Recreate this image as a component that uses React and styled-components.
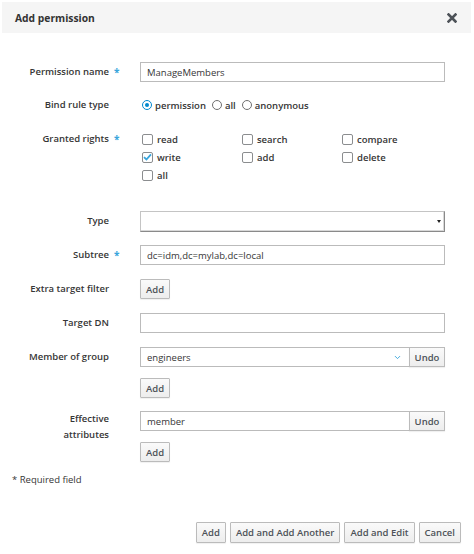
import React from "react";
import styled, { createGlobalStyle } from "styled-components";
import { ChevronDown } from "lucide-react";

const GlobalStyle = createGlobalStyle`
  html, body {
    margin: 0;
    padding: 0;
    background: #ffffff;
  }
  body {
    font-family: "Open Sans", "Liberation Sans", sans-serif;
    color: #363636;
  }
`;

const Dialog = styled.div`
  width: 474px;
  height: 554px;
  background: #fff;
  display: flex;
  flex-direction: column;
`;

const Header = styled.div`
  margin: 2px 3px 0 2px;
  height: 31px;
  padding: 0 14px 0 13px;
  display: flex;
  align-items: center;
  justify-content: space-between;
  background: #f5f5f5;
`;

const Title = styled.h4`
  margin: 0;
  font-size: 10.3px;
  font-weight: 700;
  color: #333;
`;

const Close = styled.button`
  border: 0;
  background: none;
  padding: 0;
  display: flex;
  color: #4d5258;
`;

const Form = styled.div`
  padding: 29px 0 0 0;
  display: flex;
  flex-direction: column;
`;

const Row = styled.div`
  display: grid;
  grid-template-columns: 109px 31px 305px;
  align-items: start;
  margin-bottom: ${(p) => p.$gap ?? 14}px;
`;

const Label = styled.div`
  text-align: right;
  font-size: 9.5px;
  font-weight: 600;
  line-height: ${(p) => p.$lh ?? 20}px;
  color: #363636;
  white-space: nowrap;
`;

const Star = styled.span`
  padding-left: 5px;
  font-size: 10px;
  font-weight: 700;
  line-height: ${(p) => p.$lh ?? 20}px;
  color: #39a5dc;
`;

const Field = styled.div`
  display: flex;
  flex-direction: column;
  gap: ${(p) => p.$gap ?? 10}px;
  align-items: flex-start;
`;

const Input = styled.div`
  box-sizing: border-box;
  width: 305px;
  height: 20px;
  border: 1px solid #bbb;
  padding: 0 6px;
  display: flex;
  align-items: center;
  justify-content: space-between;
  font-size: 9.5px;
  color: #363636;
  background: #fff;
`;

const GroupInput = styled(Input)`
  width: auto;
  flex: 1;
  padding-right: 7px;
`;

const Select = styled.div`
  box-sizing: border-box;
  width: 305px;
  height: 21px;
  border: 1px solid #c4c4c4;
  border-right-color: #8a8a8a;
  border-bottom-color: #8a8a8a;
  box-shadow: inset -1px -1px 0 #d8d8d8;
  display: flex;
  align-items: center;
  justify-content: flex-end;
  padding-right: 3px;
`;

const Caret = styled.span`
  width: 0;
  height: 0;
  border-left: 2.5px solid transparent;
  border-right: 2.5px solid transparent;
  border-top: 3px solid #222;
`;

const Group = styled.div`
  display: flex;
  width: 305px;
`;

const Button = styled.button`
  box-sizing: border-box;
  height: ${(p) => p.$h ?? 20}px;
  padding: 0 ${(p) => p.$px ?? 5}px;
  border: 1px solid #bbb;
  border-radius: 1px;
  background: linear-gradient(#fafafa, #ededed);
  font-family: inherit;
  font-size: 9.5px;
  font-weight: 600;
  color: #4d5258;
  box-shadow: 0 1px 1px rgba(0, 0, 0, 0.06);
  cursor: pointer;
`;

const AttachedButton = styled(Button)`
  margin-left: -1px;
  height: 20px;
  border-radius: 0;
  width: 36px;
  padding: 0;
`;

const Radios = styled.div`
  display: flex;
  align-items: center;
  height: 20px;
  padding-left: 2px;
  gap: 6px;
`;

const Option = styled.label`
  display: flex;
  align-items: center;
  gap: 3px;
  font-size: 9.5px;
  font-weight: 600;
  color: #363636;
`;

const Radio = styled.span`
  box-sizing: border-box;
  width: 10px;
  height: 10px;
  border-radius: 50%;
  border: 1px solid ${(p) => (p.$on ? "#0088ce" : "#6f6f6f")};
  display: flex;
  align-items: center;
  justify-content: center;
  &::after {
    content: "";
    width: 4px;
    height: 4px;
    border-radius: 50%;
    background: ${(p) => (p.$on ? "#0088ce" : "transparent")};
  }
`;

const Checks = styled.div`
  display: grid;
  grid-template-columns: 100px 100px 100px;
  grid-auto-rows: 18px;
  padding-left: 2px;
`;

const Box = styled.span`
  box-sizing: border-box;
  width: 11px;
  height: 11px;
  border: 1px solid #8b8d8f;
  border-radius: 2px;
  display: flex;
  align-items: center;
  justify-content: center;
  margin-right: 1px;
`;

const Required = styled.div`
  padding-left: 12px;
  margin-top: 10px;
  font-size: 9.5px;
  line-height: 16px;
  color: #363636;
`;

const Footer = styled.div`
  margin-top: 34px;
  display: flex;
  justify-content: flex-end;
  gap: 4px;
  padding-right: 13px;
`;

const Check = ({ label, on }) => (
  <Option>
    <Box>
      {on && (
        <svg width="9" height="8" viewBox="0 0 9 8">
          <path d="M1 4.2 L3.4 6.5 L8 1.3" fill="none" stroke="#39a5dc" strokeWidth="1.8" />
        </svg>
      )}
    </Box>
    {label}
  </Option>
);

export default function App() {
  return (
    <Dialog>
      <GlobalStyle />
      <Header>
        <Title>Add permission</Title>
        <Close aria-label="close">
          <svg width="10" height="10" viewBox="0 0 10 10">
            <path d="M1.5 1.5 L8.5 8.5 M8.5 1.5 L1.5 8.5" stroke="currentColor" strokeWidth="2.6" strokeLinecap="square" />
          </svg>
        </Close>
      </Header>
      <Form>
        <Row $gap={13}>
          <Label>Permission name</Label>
          <Star>*</Star>
          <Input>ManageMembers</Input>
        </Row>
        <Row $gap={15}>
          <Label>Bind rule type</Label>
          <span />
          <Radios>
            <Option><Radio $on />permission</Option>
            <Option><Radio />all</Option>
            <Option><Radio />anonymous</Option>
          </Radios>
        </Row>
        <Row $gap={27}>
          <Label $lh={18}>Granted rights</Label>
          <Star $lh={18}>*</Star>
          <Checks>
            <Check label="read" />
            <Check label="search" />
            <Check label="compare" />
            <Check label="write" on />
            <Check label="add" />
            <Check label="delete" />
            <Check label="all" />
          </Checks>
        </Row>
        <Row $gap={13}>
          <Label>Type</Label>
          <span />
          <Select><Caret /></Select>
        </Row>
        <Row>
          <Label>Subtree</Label>
          <Star>*</Star>
          <Input>dc=idm,dc=mylab,dc=local</Input>
        </Row>
        <Row>
          <Label>Extra target filter</Label>
          <span />
          <Field><Button>Add</Button></Field>
        </Row>
        <Row>
          <Label>Target DN</Label>
          <span />
          <Input />
        </Row>
        <Row $gap={13}>
          <Label>Member of group</Label>
          <span />
          <Field $gap={11}>
            <Group>
              <GroupInput>
                engineers
                <ChevronDown size={9} color="#39a5dc" strokeWidth={2.5} />
              </GroupInput>
              <AttachedButton>Undo</AttachedButton>
            </Group>
            <Button>Add</Button>
          </Field>
        </Row>
        <Row $gap={0}>
          <Label $lh={16}>Effective<br />attributes</Label>
          <span />
          <Field $gap={11}>
            <Group>
              <GroupInput>member</GroupInput>
              <AttachedButton>Undo</AttachedButton>
            </Group>
            <Button>Add</Button>
          </Field>
        </Row>
        <Required>* Required field</Required>
        <Footer>
          <Button $h={21}>Add</Button>
          <Button $h={21}>Add and Add Another</Button>
          <Button $h={21}>Add and Edit</Button>
          <Button $h={21}>Cancel</Button>
        </Footer>
      </Form>
    </Dialog>
  );
}
